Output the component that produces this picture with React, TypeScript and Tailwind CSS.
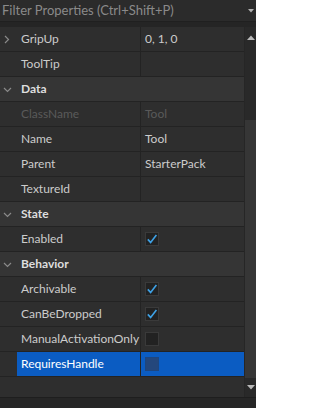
import React from "react";

type Row =
  | { kind: "header"; label: string }
  | {
      kind: "prop";
      label: string;
      value?: string;
      check?: boolean;
      expand?: boolean;
      disabled?: boolean;
      selected?: boolean;
    };

const rows: Row[] = [
  { kind: "prop", label: "GripUp", value: "0, 1, 0", expand: true },
  { kind: "prop", label: "ToolTip", value: "" },
  { kind: "header", label: "Data" },
  { kind: "prop", label: "ClassName", value: "Tool", disabled: true },
  { kind: "prop", label: "Name", value: "Tool" },
  { kind: "prop", label: "Parent", value: "StarterPack" },
  { kind: "prop", label: "TextureId", value: "" },
  { kind: "header", label: "State" },
  { kind: "prop", label: "Enabled", check: true },
  { kind: "header", label: "Behavior" },
  { kind: "prop", label: "Archivable", check: true },
  { kind: "prop", label: "CanBeDropped", check: true },
  { kind: "prop", label: "ManualActivationOnly", check: false },
  { kind: "prop", label: "RequiresHandle", check: false, selected: true },
];

function Checkbox({ on, selected }: { on: boolean; selected?: boolean }) {
  return (
    <div
      className={`flex h-[14px] w-[14px] items-center justify-center border ${
        selected ? "border-[#1d4680] bg-[#24477c]" : "border-[#3a3a3a] bg-[#222222]"
      }`}
    >
      {on ? (
        <svg width="12" height="12" viewBox="0 0 12 12">
          <path d="M1.8 6.4 L4.6 9.4 L10.4 2" fill="none" stroke="#3ea2e6" strokeWidth="1.6" />
        </svg>
      ) : null}
    </div>
  );
}

function Chevron({ open }: { open: boolean }) {
  return open ? (
    <svg width="9" height="6" viewBox="0 0 9 6">
      <path d="M1 1 L4.5 4.5 L8 1" fill="none" stroke="#8a8a8a" strokeWidth="1.2" />
    </svg>
  ) : (
    <svg width="6" height="9" viewBox="0 0 6 9">
      <path d="M1 1 L4.5 4.5 L1 8" fill="none" stroke="#8a8a8a" strokeWidth="1.2" />
    </svg>
  );
}

export default function App() {
  return (
    <div
      className="flex h-[408px] w-[256px] flex-col overflow-hidden bg-[#2e2e2e] text-[12px] text-[#cccccc]"
      style={{ fontFamily: "Lato, 'Noto Sans', sans-serif" }}
    >
      {/* filter bar */}
      <div className="flex h-[22px] shrink-0 items-center justify-between border-b border-[#202020] bg-[#2b2b2b] pl-[2px] pr-[2px]">
        <span className="text-[13px] text-[#8a8a8a]">Filter Properties (Ctrl+Shift+P)</span>
        <svg width="6" height="4" viewBox="0 0 6 4" className="mt-[1px]">
          <path d="M0 0 L6 0 L3 3.5 Z" fill="#b0b0b0" />
        </svg>
      </div>
      <div className="h-[5px] shrink-0 bg-[#252525]" />

      <div className="flex h-[370px] shrink-0">
        <div className="w-[244px]">
          {rows.map((row) =>
            row.kind === "header" ? (
              <div
                key={row.label}
                className="flex h-[25px] items-center border-b border-[#232323] bg-[#353535]"
              >
                <div className="flex w-[21px] justify-center pr-[6px] pt-[1px]">
                  <Chevron open />
                </div>
                <span className="font-bold text-[#dedede]">{row.label}</span>
              </div>
            ) : (
              <div key={row.label} className="flex h-[25px] border-b border-[#232323]">
                <div className="flex w-[17px] items-center justify-center pr-[4px]">
                  {row.expand ? <Chevron open={false} /> : null}
                </div>
                <div className={`flex flex-1 ${row.selected ? "bg-[#0b5cc2]" : ""}`}>
                  <div
                    className={`flex w-[124px] items-center border-r border-[#232323] pl-[4px] ${
                      row.disabled ? "text-[#5a5a5a]" : row.selected ? "text-white" : ""
                    }`}
                  >
                    {row.label}
                  </div>
                  <div
                    className={`flex flex-1 items-center pl-[4px] ${
                      row.disabled ? "text-[#5a5a5a]" : ""
                    }`}
                  >
                    {row.check !== undefined ? (
                      <Checkbox on={row.check} selected={row.selected} />
                    ) : (
                      row.value
                    )}
                  </div>
                </div>
              </div>
            )
          )}
        </div>

        {/* scrollbar */}
        <div className="flex w-[12px] flex-col border-l border-[#262626] bg-[#292929]">
          <div className="flex h-[20px] items-center justify-center">
            <svg width="8" height="5" viewBox="0 0 8 5">
              <path d="M0 5 L4 0.5 L8 5 Z" fill="#b8b8b8" />
            </svg>
          </div>
          <div className="h-[73px]" />
          <div className="flex-1 bg-[#363636]" />
          <div className="flex h-[19px] items-center justify-center">
            <svg width="8" height="5" viewBox="0 0 8 5">
              <path d="M0 0 L8 0 L4 4.5 Z" fill="#b8b8b8" />
            </svg>
          </div>
        </div>
      </div>

      <div className="flex-1 border-t border-[#1e1e1e] bg-[#262626]" />
    </div>
  );
}
